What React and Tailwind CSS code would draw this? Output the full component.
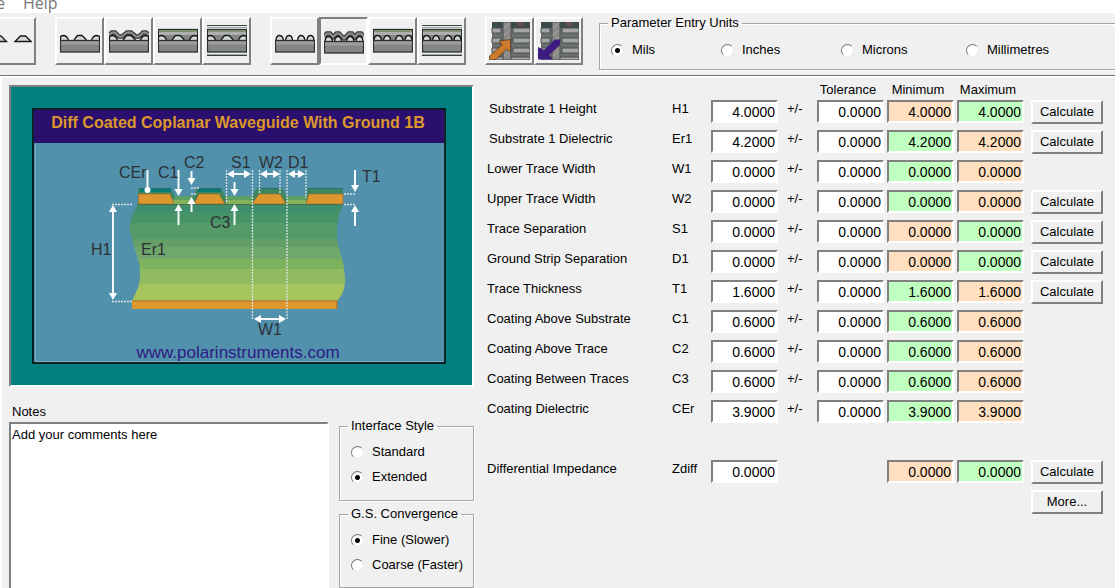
import { useState } from 'react'
import clsx from 'clsx'

const UNITS = [
  { id: 'mils', label: 'Mils', width: 'w-[110px]' },
  { id: 'inches', label: 'Inches', width: 'w-[120px]' },
  { id: 'microns', label: 'Microns', width: 'w-[125px]' },
  { id: 'mm', label: 'Millimetres', width: 'w-[110px]' },
]

// peachMin: the minimum cell is peach and the maximum green, otherwise the reverse
const PARAMS = [
  { label: 'Substrate 1 Height', sym: 'H1', value: '4.0000', peachMin: true, calc: true, indent: true },
  { label: 'Substrate 1 Dielectric', sym: 'Er1', value: '4.2000', calc: true, indent: true },
  { label: 'Lower Trace Width', sym: 'W1', value: '0.0000' },
  { label: 'Upper Trace Width', sym: 'W2', value: '0.0000', calc: true },
  { label: 'Trace Separation', sym: 'S1', value: '0.0000', peachMin: true, calc: true },
  { label: 'Ground Strip Separation', sym: 'D1', value: '0.0000', peachMin: true, calc: true },
  { label: 'Trace Thickness', sym: 'T1', value: '1.6000', calc: true },
  { label: 'Coating Above Substrate', sym: 'C1', value: '0.6000' },
  { label: 'Coating Above Trace', sym: 'C2', value: '0.6000' },
  { label: 'Coating Between Traces', sym: 'C3', value: '0.6000' },
  { label: 'Coating Dielectric', sym: 'CEr', value: '3.9000' },
]

const RAISED = 'border-2 border-t-white border-l-white border-r-[#808080] border-b-[#808080]'
const SUNKEN = 'border-2 border-t-[#808080] border-l-[#808080] border-r-white border-b-white'

/* ---------- toolbar icons ---------- */

const WIDE = 'M-1.500 20.500 L4 15 H9 L14.500 20.500 Z M23 20.500 L28.500 15 H33.500 L39 20.500 Z'
const THREE = 'M.5 19 V15.500 Q1.500 14.500 4 14.500 Q7 15 8.500 19 M14 19 L17.500 14.500 H22 L26.500 19 M31.500 19 Q33 15 36 14.500 Q38.500 14.500 39.500 15.500 V19'
const FOUR = 'M1 19 Q1.500 14.500 4.500 14.500 Q7.500 14.500 8.500 19 M10.500 19 Q11.500 14.500 14 14.500 Q17 14.500 17.500 19 M22.500 19 Q23.500 14.500 26 14.500 Q29 14.500 30 19 M32 19 Q32.500 14.500 35.500 14.500 Q38.500 14.500 39 19'
const THREE_COAT = 'M0 14 L3 11.500 H6 L10 15.500 H13 L18 11.500 H22 L27 15.500 H30 L34 11.500 H37 L40 14'
const FOUR_COAT = 'M0 14.500 L3 11.500 H6 L9 15 L12.500 11.500 H15 L20 16.500 L25 11.500 H28 L31 15 L34 11.500 H37 L40 14.500'

function StackIcon({ bumps, coat, kind }) {
  return (
    <svg viewBox="0 0 40 40" className="size-10 shrink-0" fill="none">
      {(kind === 'embedded' || kind === 'planes') && (
        <>
          <rect x="0.5" y="8.500" width="39" height="12" fill="#858585" stroke="#26312c" strokeWidth="1.3" />
          <rect x="1" y="9" width="38" height="2" fill="#7f8f70" />
          <rect x="1" y="11" width="38" height="3" fill="#acb0aa" />
        </>
      )}
      {kind === 'coated' && (
        <>
          <path d={coat} stroke="#383838" strokeWidth="4.500" />
          <path d={coat} stroke="#929292" strokeWidth="2" />
        </>
      )}
      <path d={bumps} fill="#d4d8d5" stroke="#181818" strokeWidth="1.3" />
      {kind !== 'bare' && (
        <>
          <rect x="0.5" y="19.500" width="39" height="11.500" fill="#858585" stroke="#2c3030" strokeWidth="1.3" />
          <rect x="1" y="20.500" width="38" height="3" fill="#9d9d9d" />
        </>
      )}
      {kind === 'planes' && (
        <>
          <path d="M0 4.500 H40 M0 34.500 H40" stroke="#36433c" />
          <path d="M0 6.500 H40 M0 33.500 H40" stroke="#a0a3a0" />
        </>
      )}
    </svg>
  )
}

function LayerIcon({ direction }) {
  return (
    <svg viewBox="-3 0 41 38" className="w-[41px] h-[38px] shrink-0">
      <rect width="38" height="38" fill="#6d7070" />
      <rect width="38" height="6" fill="#3b4a4a" />
      <path d="M24 0 H32 V4 L28 5 L25 3 Z" fill="#63504c" />
      <g fill="#a5a5a5" stroke="#4b4f4e" strokeWidth="1">
        <path d="M0 6 H9 V11 H0 Z M0 16 H9 V21 H0 Z M0 26 H9 V31 H0 Z" />
        <path d="M21 6 H38 V11 H21 Z M21 16 H38 V21 H21 Z M21 26 H38 V31 H21 Z" />
        <path d="M1 35 H38 V38 H1 Z" />
        <rect x="11" y="0" width="8" height="38" fill="#8b8987" />
      </g>
      <path d="M12 6 L18 1 M12 13 L18 8 M12 20 L18 15 M12 27 L18 22 M12 34 L18 29" stroke="#aaa9a7" />
      {direction === 'up' ? (
        <path
          d="M-2.500 38 V34 L10 23 L7 19 L18.500 17.500 V30 L14.500 27 L4 37.500 Z"
          fill="#cc7a2c" stroke="#4d3321" strokeWidth="0.700" />
      ) : (
        <path
          d="M-3 25 L3 28 L14 17.500 H19 V23 L8 33 L12 37.500 H-3 Z"
          fill="#3d1b80" />
      )}
    </svg>
  )
}

function ToolButton({ title, pressed, children }) {
  return (
    <button
      type="button"
      aria-label={title}
      className={clsx(
        'w-[49px] h-12 shrink-0 flex items-center justify-center overflow-hidden bg-[#f0f0f0]',
        pressed ? SUNKEN + ' pt-px pl-px' : RAISED
      )}>
      {children}
    </button>
  )
}

/* ---------- form pieces ---------- */

function Group({ legend, className, children }) {
  return (
    <fieldset className={clsx('min-w-0 border border-[#a5a5a5] px-2 shadow-[1px_1px_0_#fff,inset_1px_1px_0_#fff]', className)}>
      <legend className="px-[3px] leading-4 whitespace-nowrap">{legend}</legend>
      {children}
    </fieldset>
  )
}

function Radio({ name, label, checked, onChange, className }) {
  return (
    <label className={clsx('flex items-center gap-2 leading-4 whitespace-nowrap', className)}>
      <input
        type="radio"
        name={name}
        checked={checked}
        onChange={onChange}
        className="appearance-none size-[13px] shrink-0 rounded-full bg-white border border-t-[#777] border-l-[#777] border-r-[#e8e8e8] border-b-[#e8e8e8] checked:bg-[radial-gradient(circle,#000_2px,#fff_3px)]"
      />
      {label}
    </label>
  )
}

function NumberBox({ label, value, tint }) {
  return (
    <input
      type="text"
      aria-label={label}
      defaultValue={value}
      className={clsx('block w-[67px] h-[23px] pr-px text-right text-[14px] leading-4 outline-none', SUNKEN, tint || 'bg-white')}
    />
  )
}

function PushButton({ children }) {
  return (
    <button type="button" className={clsx('block w-[72px] h-6 pb-px leading-4 bg-[#f0f0f0]', RAISED)}>
      {children}
    </button>
  )
}

const PEACH = 'bg-[#ffdfbf]'
const GREEN = 'bg-[#bfffbf]'

function ParamRow({ label, sym, value, peachMin, calc, indent, result }) {
  return (
    <tr className="h-[30px] align-top">
      <th scope="row" className={clsx('text-left font-normal leading-[18px]', indent && 'pl-[2px]')}>{label}</th>
      <td className="leading-[18px]">{sym}</td>
      <td><NumberBox label={label} value={value} /></td>
      <td className="pl-[6px] leading-[18px]">{!result && '+/-'}</td>
      <td>{!result && <NumberBox label={label + ' tolerance'} value="0.0000" />}</td>
      <td><NumberBox label={label + ' minimum'} value={value} tint={peachMin ? PEACH : GREEN} /></td>
      <td><NumberBox label={label + ' maximum'} value={value} tint={peachMin ? GREEN : PEACH} /></td>
      <td>{calc && <PushButton>Calculate</PushButton>}</td>
    </tr>
  )
}

/* ---------- cross-section drawing ---------- */

const BANDS = [
  [204, 9, '#3f8f6b'], [213, 10, '#479468'], [223, 16, '#559b69'], [239, 8, '#649f68'],
  [247, 12, '#70a76d'], [259, 10, '#7db25f'], [269, 15, '#92bb61'], [284, 17, '#a6c45c'],
]

const LABELS = [
  ['CEr', 119, 178], ['C1', 158, 178], ['C2', 184, 168], ['S1', 231, 168], ['W2', 259, 168],
  ['D1', 288, 168], ['T1', 362, 182], ['C3', 210, 228], ['H1', 91, 255], ['Er1', 141, 255], ['W1', 258, 335],
]

// [x, tail y, tip y]
const VERTICAL = [
  [178.5, 170, 196], [178.5, 225, 204], [191.5, 171, 185], [191.5, 212, 197],
  [234.5, 182, 196], [234.5, 225, 204], [355, 170, 192], [355, 226, 205],
  [113, 250, 205], [113, 250, 300],
]

// [left, right, y]
const HORIZONTAL = [[227, 251, 174], [260, 280, 174], [288, 305, 174], [254, 286, 319]]

function WaveguideDiagram() {
  return (
    <svg viewBox="32 108 414 256" className="block w-full" fontFamily='"Liberation Sans", Arial, sans-serif'>
      <defs>
        <clipPath id="board">
          <path d="M138 204 Q126 225 131 235 Q135 252 139 262 Q142 279 137 290 L132 301 H337 Q346 292 345 276 Q344 262 338 245 Q334 226 343 204 Z" />
        </clipPath>
      </defs>
      <rect x="33" y="109" width="412" height="254" fill="#5291ac" stroke="#000" strokeWidth="1.500" />
      <rect x="34" y="110" width="410" height="33" fill="#2a0f6e" />
      <path d="M35.500 144 V361.500 H443.500" fill="none" stroke="#79adc4" />

      <g clipPath="url(#board)">
        {BANDS.map(([y, h, fill]) => (
          <rect key={y} x="125" y={y} width="225" height={h} fill={fill} shapeRendering="crispEdges" />
        ))}
      </g>
      <rect x="132" y="301" width="205" height="8" fill="#dc972d" />
      <path d="M132 301 H337 V309" fill="none" stroke="#ae6a27" />

      {/* coating */}
      <rect x="172" y="196" width="135" height="4" fill="#5fa066" />
      <rect x="172" y="200" width="135" height="4" fill="#80b35b" />
      <g fill="#3d8660">
        <path d="M138 188 H171 L175 197 L171 204 H138 Z" />
        <path d="M197 188 H221 L226 198 V204 H193 V197 Z" />
        <path d="M257 188 H282 L287 197 V204 H252 V196 Z" />
        <path d="M308 188 H343 V204 H306 V194 Z" />
      </g>
      <path d="M140 190.500 H171 M198 190.500 H221" stroke="#067c77" strokeWidth="3" />
      <path d="M138 188.500 H171 M197 188.500 H221 M258 188.500 H281 M308 188.500 H343" stroke="#2d6b66" />

      {/* copper */}
      <g fill="#dc972d" stroke="#a56e30" strokeWidth="0.700">
        <path d="M138.500 194 H170 L174 204 H138.500 Z" />
        <path d="M199 194 H219 L225 204 H194 Z" />
        <path d="M259 194 H280 L286 204 H252 Z" />
        <path d="M309 194 H343 V204 H306 Z" />
      </g>
      <path d="M138 204.500 H343" stroke="#4b6d4a" />

      {/* extension lines */}
      <path
        d="M112 204.500 H132 M112 301.500 H132 M226.500 170 V203 M252.500 170 V320 M259.500 170 V194 M280 170 V194 M287 170 V320 M306 170 V198 M191 188 H199 M191 194 H197 M344 194 H356 M344 204.500 H356"
        fill="none" stroke="#dbe4e5" strokeWidth="1.300" strokeDasharray="2 1" />

      {/* dimension arrows */}
      <g stroke="#f5f8f8" strokeWidth="2">
        <path d="M147.500 170 V190" />
        {VERTICAL.map(([x, tail, tip]) => <path key={x + '-' + tip} d={`M${x} ${tail} V${tip > tail ? tip - 4 : tip + 4}`} />)}
        {HORIZONTAL.map(([l, r, y]) => <path key={l} d={`M${l + 5} ${y} H${r - 5}`} />)}
      </g>
      <g fill="#fff">
        <circle cx="147.500" cy="190" r="3" />
        {VERTICAL.map(([x, tail, tip]) => {
          const base = tip > tail ? tip - 7 : tip + 7
          return <path key={x + '-' + tip} d={`M${x - 4} ${base} H${x + 4} L${x} ${tip} Z`} />
        })}
        {HORIZONTAL.map(([l, r, y]) => (
          <path key={l} d={`M${l} ${y} L${l + 7} ${y - 4} V${y + 4} Z M${r} ${y} L${r - 7} ${y - 4} V${y + 4} Z`} />
        ))}
      </g>

      <g fill="#2c3237" fontSize="16">
        {LABELS.map(([text, x, y]) => <text key={text} x={x} y={y}>{text}</text>)}
      </g>
      <text x="238" y="128" textAnchor="middle" fontSize="16" fontWeight="bold" fill="#dc972d">
        Diff Coated Coplanar Waveguide With Ground 1B
      </text>
      <text x="238" y="358" textAnchor="middle" fontSize="17" fill="#2e1a84">www.polarinstruments.com</text>
    </svg>
  )
}

export default function App() {
  const [unit, setUnit] = useState('mils')
  const [style, setStyle] = useState('extended')
  const [convergence, setConvergence] = useState('fine')

  return (
    <div className='min-h-screen flex flex-col overflow-hidden bg-[#f0f0f0] text-black text-[13px] font-["Liberation_Sans",Arial,sans-serif]'>
      {/* Menu */}
      <nav className='h-[13px] shrink-0 flex items-end gap-[18px] overflow-hidden bg-white text-[#777] text-[16px] leading-5 font-["Open_Sans",sans-serif]'>
        <button type="button" className="w-[5px] flex justify-end">File</button>
        <button type="button">Help</button>
      </nav>

      {/* Toolbar */}
      <header className="h-[62px] shrink-0 flex items-start gap-[19px] pt-1">
        <div className="flex -ml-[13px]">
          <ToolButton title="Surface pair"><StackIcon kind="bare" bumps={WIDE} /></ToolButton>
        </div>
        <div className="flex">
          <ToolButton title="Surface coplanar"><StackIcon kind="surface" bumps={THREE} /></ToolButton>
          <ToolButton title="Coated coplanar"><StackIcon kind="coated" bumps={THREE} coat={THREE_COAT} /></ToolButton>
          <ToolButton title="Embedded coplanar"><StackIcon kind="embedded" bumps={THREE} /></ToolButton>
          <ToolButton title="Offset coplanar"><StackIcon kind="planes" bumps={THREE} /></ToolButton>
        </div>
        <div className="flex">
          <ToolButton title="Diff surface coplanar"><StackIcon kind="surface" bumps={FOUR} /></ToolButton>
          <ToolButton title="Diff coated coplanar" pressed><StackIcon kind="coated" bumps={FOUR} coat={FOUR_COAT} /></ToolButton>
          <ToolButton title="Diff embedded coplanar"><StackIcon kind="embedded" bumps={FOUR} /></ToolButton>
          <ToolButton title="Diff offset coplanar"><StackIcon kind="planes" bumps={FOUR} /></ToolButton>
        </div>
        <div className="flex">
          <ToolButton title="Send to stackup"><LayerIcon direction="up" /></ToolButton>
          <ToolButton title="Get from stackup"><LayerIcon direction="down" /></ToolButton>
        </div>
        <Group legend="Parameter Entry Units" className="flex-1 h-[55px] -mt-[2px] -ml-[3px] border-r-0">
          <div className="flex pt-[11px] pl-[3px]">
            {UNITS.map(u => (
              <Radio
                key={u.id}
                name="unit"
                label={u.label}
                className={u.width}
                checked={unit === u.id}
                onChange={() => setUnit(u.id)}
              />
            ))}
          </div>
        </Group>
      </header>

      <main className="flex-1 flex border-t border-t-[#777] shadow-[inset_2px_2px_0_#fff] pl-[9px] pr-3">
        {/* Left side: drawing, notes, options */}
        <section className="w-[465px] shrink-0 flex flex-col pt-[9px]">
          <div className={clsx('bg-[#008080] pt-[21px] pb-[21px] pl-[21px] pr-[26px]', SUNKEN)}>
            <WaveguideDiagram />
          </div>

          <div className="flex-1 flex gap-[10px] pt-[17px]">
            <div className="flex-1 flex flex-col">
              <label htmlFor="notes" className="pl-[3px] leading-4 pb-[2px]">Notes</label>
              <textarea
                id="notes"
                defaultValue="Add your comments here"
                className="flex-1 w-full resize-none bg-white border-2 border-b-0 border-t-[#808080] border-l-[#808080] border-r-white px-px pt-[3px] leading-4 outline-none"
              />
            </div>
            <div className="w-[135px] flex flex-col gap-[5px] pt-[14px]">
              <Group legend="Interface Style" className="h-[83px]">
                <div className="flex flex-col gap-[9px] pt-[10px] pl-[3px]">
                  <Radio name="style" label="Standard" checked={style === 'standard'} onChange={() => setStyle('standard')} />
                  <Radio name="style" label="Extended" checked={style === 'extended'} onChange={() => setStyle('extended')} />
                </div>
              </Group>
              <Group legend="G.S. Convergence" className="h-[82px]">
                <div className="flex flex-col gap-[9px] pt-[10px] pl-[3px]">
                  <Radio name="gs" label="Fine (Slower)" checked={convergence === 'fine'} onChange={() => setConvergence('fine')} />
                  <Radio name="gs" label="Coarse (Faster)" checked={convergence === 'coarse'} onChange={() => setConvergence('coarse')} />
                </div>
              </Group>
            </div>
          </div>
        </section>

        {/* Parameters */}
        <section className="flex-1 pt-1 pl-[13px]">
          <table className="w-full table-fixed border-collapse">
            <colgroup>
              <col />
              <col className="w-[39px]" />
              <col className="w-[70px]" />
              <col className="w-[36px]" />
              <col className="w-[70px]" />
              <col className="w-[70px]" />
              <col className="w-[74px]" />
              <col className="w-[72px]" />
            </colgroup>
            <thead>
              <tr className="h-5 leading-[18px]">
                <td colSpan={4} />
                <th scope="col" className="font-normal pr-2">Tolerance</th>
                <th scope="col" className="font-normal pr-2">Minimum</th>
                <th scope="col" className="font-normal pr-3">Maximum</th>
                <td />
              </tr>
            </thead>
            <tbody>
              {PARAMS.map(p => <ParamRow key={p.sym} {...p} />)}
              <tr className="h-[30px]"><td colSpan={8} /></tr>
              <ParamRow label="Differential Impedance" sym="Zdiff" value="0.0000" peachMin calc result />
              <tr className="h-[30px] align-top">
                <td colSpan={7} />
                <td><PushButton>More...</PushButton></td>
              </tr>
            </tbody>
          </table>
        </section>
      </main>
    </div>
  )
}
